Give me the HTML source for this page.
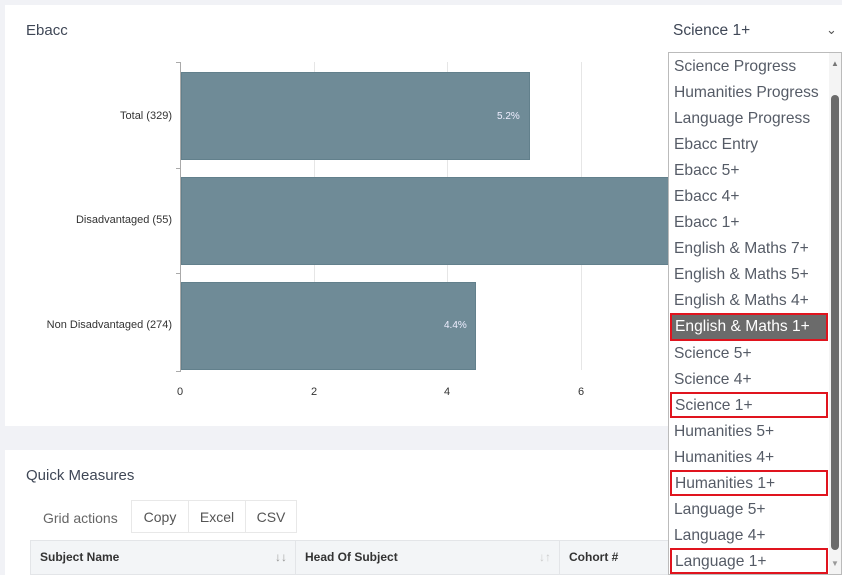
<!DOCTYPE html>
<html><head><meta charset="utf-8"><style>
body{margin:0;width:842px;height:575px;overflow:hidden;background:#f1f2f6;font-family:"Liberation Sans",sans-serif;position:relative}
.a{position:absolute}
.card{position:absolute;background:#fff}
.bar{position:absolute;background:#6f8b97;border:1px solid #62808c;box-sizing:border-box}
.lbl{position:absolute;font-size:11px;color:#333;text-align:right;width:170px;left:2px}
.pct{position:absolute;font-size:10px;color:#eef;}
.grid{position:absolute;top:62px;height:308px;width:1px;background:#e6e6e6}
.tick{position:absolute;font-size:11px;color:#333;top:386px}
.list{position:absolute;left:668px;top:52px;width:174px;height:523px;background:#fff;border:1px solid #bbb;box-sizing:border-box;overflow:hidden}
.it{position:absolute;left:1px;width:158px;height:26px;line-height:28px;padding-left:4px;font-size:15.6px;color:#555b66;white-space:nowrap;box-sizing:border-box}
.hl{background:#6b6b6b;color:#fff;border:2px solid #e0141e;padding-left:3px;line-height:24px}
.rb{border:2px solid #e0141e;padding-left:3px;line-height:24px}
.btn{position:absolute;top:500px;height:33px;line-height:33px;font-size:14px;color:#555;border:1px solid #e8e8e8;box-sizing:border-box;text-align:center;background:#fff}
.th{position:absolute;top:540px;height:35px;line-height:32px;font-size:12px;font-weight:bold;color:#333;background:#f3f5f7;border:1px solid #e3e5e8;box-sizing:border-box;padding-left:9px}
</style></head><body>
<div class="card" style="left:5px;top:5px;width:837px;height:421px"></div>
<div class="card" style="left:5px;top:450px;width:837px;height:125px"></div>
<div class="a" style="left:26px;top:22px;font-size:15px;color:#3f4756">Ebacc</div>
<div class="a" style="left:673px;top:22px;font-size:15.5px;color:#3f4756">Science 1+</div>
<div class="a" style="left:826px;top:22px;font-size:13px;color:#555">&#8964;</div>

<div class="grid" style="left:314px"></div>
<div class="grid" style="left:447px"></div>
<div class="grid" style="left:581px"></div>
<div class="a" style="left:180px;top:62px;width:1px;height:310px;background:#aaa"></div>
<div class="a" style="left:176px;top:62px;width:4px;height:1px;background:#aaa"></div>
<div class="a" style="left:176px;top:168px;width:4px;height:1px;background:#aaa"></div>
<div class="a" style="left:176px;top:273px;width:4px;height:1px;background:#aaa"></div>
<div class="a" style="left:176px;top:371px;width:4px;height:1px;background:#aaa"></div>

<div class="bar" style="left:181px;top:72px;width:349px;height:88px"></div>
<div class="bar" style="left:181px;top:177px;width:490px;height:88px"></div>
<div class="bar" style="left:181px;top:282px;width:295px;height:88px"></div>
<div class="pct" style="left:497px;top:111px">5.2%</div>
<div class="pct" style="left:444px;top:320px">4.4%</div>
<div class="lbl" style="top:110px">Total (329)</div>
<div class="lbl" style="top:214px">Disadvantaged (55)</div>
<div class="lbl" style="top:319px">Non Disadvantaged (274)</div>
<div class="tick" style="left:177px">0</div>
<div class="tick" style="left:311px">2</div>
<div class="tick" style="left:444px">4</div>
<div class="tick" style="left:578px">6</div>

<div class="a" style="left:26px;top:467px;font-size:15px;color:#3f4756">Quick Measures</div>
<div class="a" style="left:43px;top:510px;font-size:14px;color:#666">Grid actions</div>
<div class="btn" style="left:131px;width:58px">Copy</div>
<div class="btn" style="left:188px;width:58px">Excel</div>
<div class="btn" style="left:245px;width:52px">CSV</div>
<div class="th" style="left:30px;width:266px">Subject Name<span style="position:absolute;right:8px;color:#999;font-weight:normal">&#8595;&#8595;</span></div>
<div class="th" style="left:295px;width:265px">Head Of Subject<span style="position:absolute;right:8px;color:#ccc;font-weight:normal">&#8595;&#8593;</span></div>
<div class="th" style="left:559px;width:120px">Cohort #</div>

<div class="list">
<div class="it" style="top:0px">Science Progress</div>
<div class="it" style="top:26px">Humanities Progress</div>
<div class="it" style="top:52px">Language Progress</div>
<div class="it" style="top:78px">Ebacc Entry</div>
<div class="it" style="top:104px">Ebacc 5+</div>
<div class="it" style="top:130px">Ebacc 4+</div>
<div class="it" style="top:156px">Ebacc 1+</div>
<div class="it" style="top:182px">English &amp; Maths 7+</div>
<div class="it" style="top:208px">English &amp; Maths 5+</div>
<div class="it" style="top:234px">English &amp; Maths 4+</div>
<div class="it hl" style="top:260px;height:28px">English &amp; Maths 1+</div>
<div class="it" style="top:287px">Science 5+</div>
<div class="it" style="top:313px">Science 4+</div>
<div class="it rb" style="top:339px">Science 1+</div>
<div class="it" style="top:365px">Humanities 5+</div>
<div class="it" style="top:391px">Humanities 4+</div>
<div class="it rb" style="top:417px">Humanities 1+</div>
<div class="it" style="top:443px">Language 5+</div>
<div class="it" style="top:469px">Language 4+</div>
<div class="it rb" style="top:495px">Language 1+</div>
<div class="a" style="left:160px;top:0;width:12px;height:523px;background:#f4f4f4"></div>
<div class="a" style="left:162px;top:6px;font-size:8px;color:#777">&#9650;</div>
<div class="a" style="left:162px;top:42px;width:8px;height:455px;background:#6b6b6b;border-radius:4px"></div>
<div class="a" style="left:162px;top:506px;font-size:8px;color:#999">&#9660;</div>
</div>
</body></html>
